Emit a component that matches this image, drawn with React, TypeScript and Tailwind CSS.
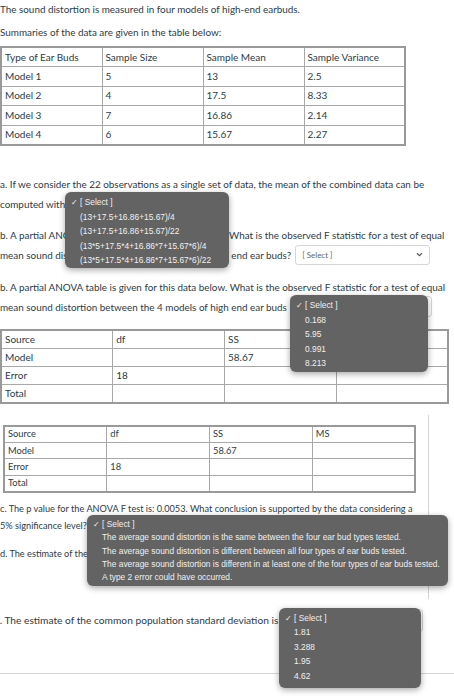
import React from "react"

const main = { fontFamily: "Lato, 'Open Sans', sans-serif" }
const menuFont = { fontFamily: "'Liberation Sans', Arial, sans-serif" }

function Chevron({ className }: { className?: string }) {
    return (
        <svg viewBox="0 0 10 6" className={className} fill="none" stroke="#555" strokeWidth="1.6">
            <path d="M1.5 1.2 L5 4.6 L8.5 1.2" />
        </svg>
    )
}

function Menu({ items, className, rowClass = "h-[14.5px]" }: { items: string[]; className: string; rowClass?: string }) {
    return (
        <div
            className={`absolute z-10 rounded-[6px] bg-[#636363] pt-[3px] text-[8.4px] leading-none text-[#f0f0f0] shadow-[0_2px_6px_rgba(0,0,0,0.35)] ${className}`}
            style={menuFont}
        >
            <div className={`flex items-center whitespace-nowrap pl-[6px] ${rowClass}`}>
                <span className="inline-block w-[9px]">✓</span>
                <span>[ Select ]</span>
            </div>
            {items.map((item) => (
                <div key={item} className={`flex items-center whitespace-nowrap pl-[15px] ${rowClass}`}>
                    {item}
                </div>
            ))}
        </div>
    )
}

export default function App() {
    const cell = "border border-[#a8a8a8] px-[3px] text-left font-normal"
    return (
        <div className="relative h-[700px] w-[454px] overflow-hidden bg-white text-[9.9px] text-[#2d3b45]" style={main}>
            <p className="leading-[18px]">The sound distortion is measured in four models of high-end earbuds.</p>
            <p className="mt-[5px] leading-[18px]">Summaries of the data are given in the table below:</p>

            <table className="mt-[5px] w-[406px] table-fixed border-collapse border-2 border-[#999] text-[10px]">
                <tbody>
                    {[
                        ["Type of Ear Buds", "Sample Size", "Sample Mean", "Sample Variance"],
                        ["Model 1", "5", "13", "2.5"],
                        ["Model 2", "4", "17.5", "8.33"],
                        ["Model 3", "7", "16.86", "2.14"],
                        ["Model 4", "6", "15.67", "2.27"],
                    ].map((row) => (
                        <tr key={row[0]} className="h-[19.6px]">
                            {row.map((c, i) => (
                                <td key={i} className={cell}>{c}</td>
                            ))}
                        </tr>
                    ))}
                </tbody>
            </table>

            {/* part a */}
            <p className="mt-[28px] leading-[20px] whitespace-nowrap">
                a. If we consider the 22 observations as a single set of data, the mean of the combined data can be
            </p>
            <div className="relative leading-[20px]">
                computed with
                <Menu
                    className="left-[65px] top-[-2px] w-[164px] h-[76px]"
                    items={[
                        "(13+17.5+16.86+15.67)/4",
                        "(13+17.5+16.86+15.67)/22",
                        "(13*5+17.5*4+16.86*7+15.67*6)/4",
                        "(13*5+17.5*4+16.86*7+15.67*6)/22",
                    ]}
                />
            </div>
            <p className="mt-[11px] leading-[20px] whitespace-nowrap">
                <span className="inline-block w-[229px] overflow-hidden align-top">b. A partial ANOVA table is given for this data below.</span>
                What is the observed F statistic for a test of equal
            </p>
            <div className="flex h-[20px] items-center whitespace-nowrap">
                <span>mean sound distortion between the 4 models of high end ear buds?</span>
                <div className="ml-[4px] flex h-[20px] w-[135px] items-center justify-between rounded-[3px] border border-[#d6d6d6] px-[6px] text-[8px] text-[#666]">
                    <span>[ Select ]</span>
                    <Chevron className="h-[5px] w-[7px]" />
                </div>
            </div>

            {/* part b repeated */}
            <p className="mt-[12px] leading-[20px] whitespace-nowrap">
                b. A partial ANOVA table is given for this data below. What is the observed F statistic for a test of equal
            </p>
            <div className="relative flex h-[20px] items-center whitespace-nowrap">
                <span>mean sound distortion between the 4 models of high end ear buds</span>
                <div className="ml-[3px] flex h-[21px] w-[142px] items-center justify-end rounded-[3px] border border-[#d6d6d6] px-[3px]">
                    <Chevron className="h-[5px] w-[7px]" />
                </div>
                <Menu className="left-[290px] top-[-2px] w-[138px] h-[77px]" items={["0.168", "5.95", "0.991", "8.213"]} />
            </div>

            <table className="mt-[12px] w-[449px] table-fixed border-collapse border-2 border-[#999] text-[10px]">
                <tbody>
                    {[
                        ["Source", "df", "SS", ""],
                        ["Model", "", "58.67", ""],
                        ["Error", "18", "", ""],
                        ["Total", "", "", ""],
                    ].map((row) => (
                        <tr key={row[0]} className="h-[18.2px]">
                            {row.map((c, i) => (
                                <td key={i} className={cell}>{c}</td>
                            ))}
                        </tr>
                    ))}
                </tbody>
            </table>

            {/* part c and d */}
            <div className="mt-[11px] w-[429px] border-r border-[#d4d4d4] pb-[37px] pt-[10px] text-[9.2px]">
                <table className="ml-[3px] w-[413px] table-fixed border-collapse border-2 border-[#999] text-[9.3px]">
                    <tbody>
                        {[
                            ["Source", "df", "SS", "MS"],
                            ["Model", "", "58.67", ""],
                            ["Error", "18", "", ""],
                            ["Total", "", "", ""],
                        ].map((row) => (
                            <tr key={row[0]} className="h-[16.5px]">
                                {row.map((c, i) => (
                                    <td key={i} className={cell}>{c}</td>
                                ))}
                            </tr>
                        ))}
                    </tbody>
                </table>
                <p className="mt-[7px] whitespace-nowrap leading-[17px]">
                    c. The p value for the ANOVA F test is: 0.0053. What conclusion is supported by the data considering a
                </p>
                <div className="relative leading-[17px]">
                    5% significance level?
                    <Menu
                        className="left-[87px] top-[-2px] w-[361px] h-[71px]"
                        rowClass="h-[13.3px]"
                        items={[
                            "The average sound distortion is the same between the four ear bud types tested.",
                            "The average sound distortion is different between all four types of ear buds tested.",
                            "The average sound distortion is different in at least one of the four types of ear buds tested.",
                            "A type 2 error could have occurred.",
                        ]}
                    />
                </div>
                <p className="mt-[11px] whitespace-nowrap leading-[17px]">d. The estimate of the common population standard deviation is</p>
            </div>

            <div className="relative mt-[12px] flex h-[20px] items-center whitespace-nowrap text-[10.2px]">
                <span className="ml-[-6px]">d. The estimate of the common population standard deviation is</span>
                <div className="ml-[3px] flex h-[23px] w-[142px] items-center justify-end rounded-[3px] border border-[#d6d6d6] px-[3px]">
                    <Chevron className="h-[5px] w-[7px]" />
                </div>
                <Menu className="left-[279px] top-[-3px] w-[142px] h-[80px]" items={["1.81", "3.288", "1.95", "4.62"]} />
            </div>
            <div className="mt-[42px] border-t border-[#d6d6d6]" />
        </div>
    )
}
